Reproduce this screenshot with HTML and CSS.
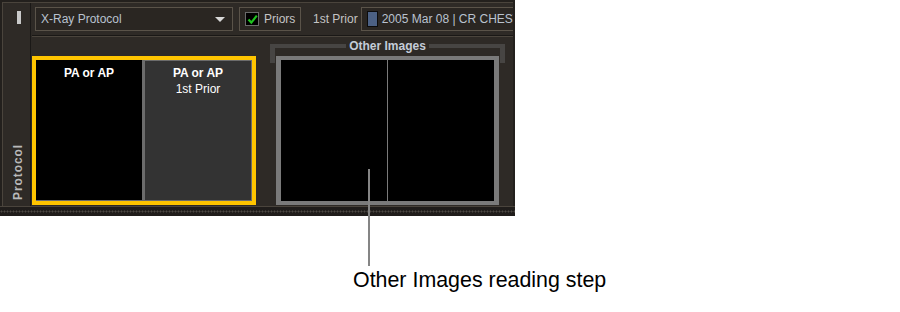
FILE: index.html
```html
<!DOCTYPE html>
<html lang="en">
<head>
    <meta charset="UTF-8">
    <meta name="viewport" content="width=device-width, initial-scale=1.0">
    <title>Other Images reading step</title>
    <link rel="stylesheet" href="styles.css">
</head>
<body>
    <div class="figure">
        <div class="viewer">
            <div class="viewer-body">
                <!-- боковая панель протокола -->
                <aside class="side">
                    <span class="side-handle"></span>
                    <span class="side-title">Protocol</span>
                </aside>

                <div class="main">
                    <div class="toolbar">
                        <div class="select">
                            <span>X-Ray Protocol</span>
                            <span class="select-arrow"></span>
                        </div>
                        <div class="toggle">
                            <span class="check">
                                <svg width="11" height="11" viewBox="0 0 11 11"><path d="M1.5 5.5 L4.3 8.6 L9.8 1.6" fill="none" stroke="#1fc41f" stroke-width="2.2"/></svg>
                            </span>
                            Priors
                        </div>
                        <span class="toolbar-label">1st Prior</span>
                        <div class="study">
                            <span class="study-swatch"></span>
                            <span class="study-text">2005 Mar 08 | CR CHEST PA AND LATERAL</span>
                        </div>
                    </div>

                    <div class="stage">
                        <div class="step-current">
                            <div class="cell cell-black">PA or AP</div>
                            <div class="cell cell-gray">PA or AP<br><span class="cell-sub">1st Prior</span></div>
                        </div>

                        <div class="step-other">
                            <div class="bracket"><span class="bracket-title">Other Images</span></div>
                            <div class="frame">
                                <div class="frame-cell"></div>
                                <div class="frame-cell"></div>
                            </div>
                        </div>
                    </div>
                </div>
            </div>
            <div class="grip"></div>
        </div>

        <!-- выноска -->
        <span class="callout-line"></span>
        <p class="callout">Other Images reading step</p>
    </div>
</body>
</html>
```

FILE: styles.css
```css
body {
    margin: 0;
    background: #ffffff;
    font-family: "Liberation Sans", Arial, sans-serif;
}
.figure {
    position: relative;
    width: 900px;
    height: 312px;
}

/* окно просмотра */
.viewer {
    width: 515px;
    height: 216px;
    background: #23201d;
    box-sizing: border-box;
    padding: 2px 2px 0 2px;
    display: flex;
    flex-direction: column;
    overflow: hidden;
}
.viewer-body {
    flex: 1;
    display: flex;
    border-top: 1px solid #4a443c;
    border-left: 1px solid #4a443c;
    background: #2e2a26;
}

.side {
    width: 27px;
    flex-shrink: 0;
    border-right: 1px solid #1a1816;
    display: flex;
    flex-direction: column;
    align-items: center;
    justify-content: space-between;
    padding: 8px 0 6px 0;
    margin-right: 1px;
}
.side-handle {
    width: 4px;
    height: 13px;
    background: #c9c9c9;
    margin-left: 5px;
}
.side-title {
    writing-mode: vertical-rl;
    transform: rotate(180deg);
    font-size: 12px;
    font-weight: bold;
    letter-spacing: 0.9px;
    color: #b9b9b9;
    margin-left: 3px;
}

.main {
    flex: 1;
    display: flex;
    flex-direction: column;
    min-width: 0;
}

.toolbar {
    height: 32px;
    display: flex;
    align-items: center;
    padding: 0 0 0 3px;
    border-bottom: 1px solid #1a1816;
    box-shadow: 0 1px 0 #4a443c;
    font-size: 12px;
    color: #b9c2cf;
    white-space: nowrap;
    overflow: hidden;
}
.toolbar > * {
    flex-shrink: 0;
}
.select {
    width: 184px;
    height: 22px;
    border: 1px solid #5a5349;
    background: #2a2622;
    display: flex;
    align-items: center;
    justify-content: space-between;
    padding: 0 7px 0 5px;
}
.select-arrow {
    width: 0;
    height: 0;
    border-left: 5px solid transparent;
    border-right: 5px solid transparent;
    border-top: 5px solid #d8d8d8;
}
.toggle {
    margin-left: 6px;
    height: 22px;
    width: 60px;
    border: 1px solid #5a5349;
    background: #2a2622;
    display: flex;
    align-items: center;
    gap: 5px;
    color: #c4c4c4;
}
.check {
    margin-left: 5px;
    width: 12px;
    height: 12px;
    background: #000;
    border: 1px solid #6a6a6a;
    display: flex;
    align-items: center;
    justify-content: center;
}
.toolbar-label {
    margin-left: 12px;
    color: #c4c4c4;
}
.study {
    margin-left: 3px;
    height: 22px;
    border: 1px solid #5a5349;
    background: #2a2622;
    display: flex;
    align-items: center;
    gap: 4px;
    padding-left: 5px;
}
.study-swatch {
    width: 9px;
    height: 14px;
    background: #4c6184;
    border: 1px solid #0c0c0c;
}

/* ячейки */
.stage {
    flex: 1;
    display: flex;
    align-items: flex-start;
}
.step-current {
    flex-shrink: 0;
    margin-top: 20px;
    width: 215px;
    height: 140px;
    border: 4px solid #ffc500;
    display: grid;
    grid-template-columns: 106px 1fr;
    gap: 3px;
    background: #6c6c6c;
    padding: 0 1px 1px 0;
}
.cell {
    font-size: 12px;
    font-weight: bold;
    color: #ffffff;
    text-align: center;
    line-height: 16px;
    padding-top: 5px;
}
.cell-black {
    background: #000;
}
.cell-gray {
    background: #333333;
    border-top: 1px solid #6c6c6c;
    padding-top: 4px;
}
.cell-sub {
    font-weight: normal;
}

.step-other {
    flex-shrink: 0;
    margin-left: 14px;
    margin-top: 8px;
    width: 235px;
}
.bracket {
    height: 15px;
    border: 5px solid #474543;
    border-top-width: 4px;
    border-bottom: none;
    display: flex;
    justify-content: center;
}
.bracket-title {
    margin-top: -9px;
    height: 14px;
    padding: 0 3px;
    background: #2e2a26;
    font-size: 12px;
    font-weight: bold;
    line-height: 14px;
    color: #c4ccd8;
}
.frame {
    margin: -7px 6px 0 6px;
    height: 141px;
    border: 4px solid #7a7a7a;
    border-left-width: 5px;
    border-right-width: 5px;
    display: grid;
    grid-template-columns: 1fr 1fr;
    gap: 1px;
    background: #7a7a7a;
}
.frame-cell {
    background: #000;
}

.grip {
    height: 10px;
    border-top: 1px solid #4a443c;
    box-sizing: border-box;
    margin: 0 -2px;
    background-color: #201d1b;
    background-image: radial-gradient(circle, #4e4944 0.9px, transparent 1.1px);
    background-size: 3px 3px;
    background-position: 0 3px;
    background-repeat: repeat-x;
}

/* выноска */
.callout-line {
    position: absolute;
    left: 368px;
    top: 169px;
    width: 2px;
    height: 97px;
    background: #858585;
}
.callout {
    margin: 0;
    padding: 52px 0 0 353px;
    font-size: 21.4px;
    line-height: 24px;
    color: #000;
}
```
